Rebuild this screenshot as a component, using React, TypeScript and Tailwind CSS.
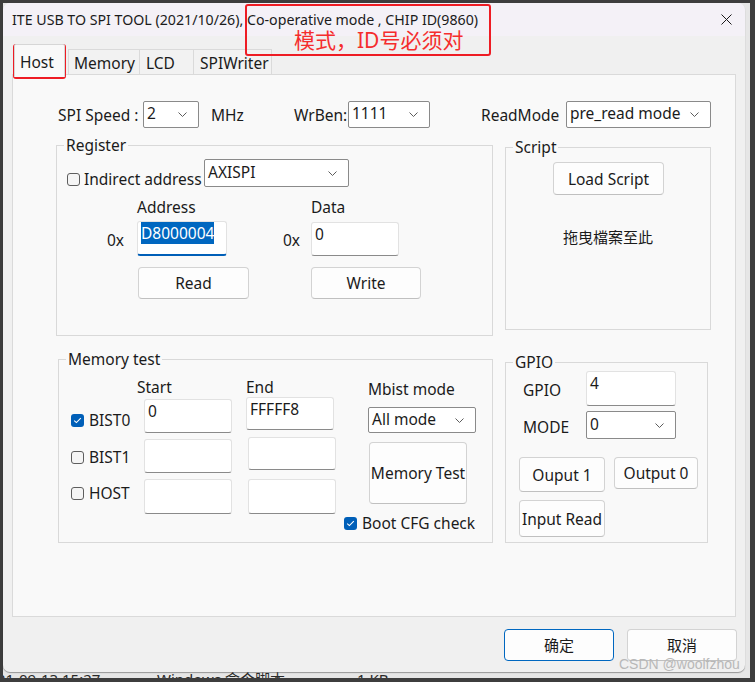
import React from "react";

// Windows 11 style "ITE USB TO SPI TOOL" dialog, Host tab

function Chevron() {
  return (
    <svg width="9" height="5" viewBox="0 0 9 5" className="shrink-0">
      <path d="M0.5 0.5 L4.5 4.5 L8.5 0.5" fill="none" stroke="#5c5c5c" strokeWidth="1" />
    </svg>
  );
}

function Select({ value, className }: { value: string; className: string }) {
  return (
    <div
      className={`flex items-center justify-between shrink-0 bg-white border border-[#8a8a8a] rounded-[2px] pl-[3px] pr-[11px] ${className}`}
    >
      <span className="-mt-[3px] whitespace-nowrap">{value}</span>
      <Chevron />
    </div>
  );
}

function Field({
  value = "",
  className,
  focused = false,
}: {
  value?: string;
  className: string;
  focused?: boolean;
}) {
  return (
    <div
      className={`shrink-0 bg-white border border-[#e2e2e2] rounded-[3px] pl-[3px] pt-[1px] ${
        focused ? "border-b-2 border-b-[#005fb8]" : "border-b-[#8a8a8a]"
      } ${className}`}
    >
      {focused ? <span className="bg-[#0067c0] text-white">{value}</span> : value}
    </div>
  );
}

function Check({ checked = false }: { checked?: boolean }) {
  if (checked) {
    return (
      <span className="flex w-[13px] h-[13px] shrink-0 items-center justify-center rounded-[3px] bg-[#005fb8]">
        <svg width="9" height="7" viewBox="0 0 9 7">
          <path d="M1.2 3.6 L3.4 5.6 L7.8 1.2" fill="none" stroke="white" strokeWidth="1.1" />
        </svg>
      </span>
    );
  }
  return <span className="w-[13px] h-[13px] shrink-0 rounded-[3px] border border-[#5e5e5e] bg-[#f5f5f5]" />;
}

function Btn({
  children,
  className,
  primary = false,
}: {
  children: React.ReactNode;
  className: string;
  primary?: boolean;
}) {
  return (
    <button
      type="button"
      className={`flex shrink-0 items-center justify-center whitespace-nowrap bg-[#fdfdfd] border rounded-[4px] ${
        primary ? "border-[#0067c0]" : "border-[#d3d3d3] border-b-[#c0c0c0]"
      } ${className}`}
    >
      {children}
    </button>
  );
}

function Group({
  title,
  className,
  children,
}: {
  title: string;
  className: string;
  children: React.ReactNode;
}) {
  return (
    <fieldset className={`shrink-0 border border-[#d9d9d9] ${className}`}>
      <legend className="ml-[7px] px-[2px] leading-[20px]">{title}</legend>
      {children}
    </fieldset>
  );
}

function CheckLabel({ label, checked, className }: { label: string; checked?: boolean; className: string }) {
  return (
    <div className={`flex items-center h-[14px] w-[85px] shrink-0 pl-[12px] ${className}`}>
      <Check checked={checked} />
      <span className="ml-[5px]">{label}</span>
    </div>
  );
}

function RegisterGroup() {
  return (
    <Group title="Register" className="w-[437px] h-[201px]">
      <div className="flex items-start h-[28px] mt-[4px] pl-[10px]">
        <div className="flex items-center w-[137px] h-[14px] mt-[13px]">
          <Check />
          <span className="ml-[4px] whitespace-nowrap">Indirect address</span>
        </div>
        <Select value="AXISPI" className="w-[145px] h-[28px]" />
      </div>
      <div className="flex h-[20px] mt-[10px] pl-[80px]">
        <span className="w-[174px]">Address</span>
        <span>Data</span>
      </div>
      <div className="flex items-center mt-[4px] pl-[50px]">
        <span className="w-[30px] pt-[3px]">0x</span>
        <Field value="D8000004" focused className="w-[90px] h-[35px]" />
        <span className="w-[84px] pl-[56px] pt-[3px]">0x</span>
        <Field value="0" className="w-[88px] h-[34px]" />
      </div>
      <div className="flex mt-[11px] pl-[81px]">
        <Btn className="w-[111px] h-[32px]">Read</Btn>
        <Btn className="w-[110px] h-[32px] ml-[62px]">Write</Btn>
      </div>
    </Group>
  );
}

function MemoryGroup() {
  return (
    <Group title="Memory test" className="w-[435px] h-[194px] ml-[2px] mt-[13px]">
      <div className="flex items-start">
        <div className="w-[277px] shrink-0">
          <div className="flex h-[20px] mt-[8px] pl-[78px]">
            <span className="w-[109px]">Start</span>
            <span>End</span>
          </div>
          <div className="flex items-start h-[36px]">
            <CheckLabel label="BIST0" checked className="mt-[16px]" />
            <Field value="0" className="w-[88px] h-[34px] mt-[2px]" />
            <Field value="FFFFF8" className="w-[88px] h-[33px] ml-[14px]" />
          </div>
          <div className="flex items-start h-[36px] mt-[4px]">
            <CheckLabel label="BIST1" className="mt-[13px]" />
            <Field className="w-[88px] h-[34px] mt-[2px]" />
            <Field className="w-[88px] h-[33px] ml-[16px]" />
          </div>
          <div className="flex items-start h-[35px] mt-[6px]">
            <CheckLabel label="HOST" className="mt-[7px]" />
            <Field className="w-[88px] h-[35px]" />
            <Field className="w-[88px] h-[35px] ml-[16px]" />
          </div>
        </div>
        <div className="ml-[32px]">
          <div className="h-[20px] mt-[10px] whitespace-nowrap">Mbist mode</div>
          <Select value="All mode" className="w-[108px] h-[26px] mt-[8px]" />
          <Btn className="w-[98px] h-[62px] mt-[9px] ml-[1px]">Memory Test</Btn>
        </div>
      </div>
      <div className="flex items-center h-[16px] mt-[1px] pl-[285px]">
        <Check checked />
        <span className="ml-[5px] whitespace-nowrap">Boot CFG check</span>
      </div>
    </Group>
  );
}

function ScriptGroup() {
  return (
    <Group title="Script" className="w-[206px] h-[193px] mt-[9px]">
      <Btn className="w-[111px] h-[33px] mt-[5px] ml-[47px]">Load Script</Btn>
      <div className="mt-[32px] text-center text-[15px] font-['Noto_Sans_CJK_TC',sans-serif]">拖曳檔案至此</div>
    </Group>
  );
}

function GpioGroup() {
  return (
    <Group title="GPIO" className="w-[203px] h-[191px] mt-[22px]">
      <div className="flex items-center pl-[17px]">
        <span className="w-[63px] pt-[2px]">GPIO</span>
        <Field value="4" className="w-[90px] h-[35px] -mt-[1px]" />
      </div>
      <div className="flex items-center mt-[5px] pl-[17px]">
        <span className="w-[63px] pt-[4px]">MODE</span>
        <Select value="0" className="w-[90px] h-[28px]" />
      </div>
      <div className="flex items-start mt-[18px] pl-[13px]">
        <Btn className="w-[86px] h-[35px]">Ouput 1</Btn>
        <Btn className="w-[84px] h-[32px] ml-[9px]">Output 0</Btn>
      </div>
      <div className="mt-[8px] pl-[13px]">
        <Btn className="w-[86px] h-[37px]">Input Read</Btn>
      </div>
    </Group>
  );
}

function HostPanel() {
  return (
    <div className="ml-[9px] w-[724px] h-[543px] shrink-0 border border-[#dadada] bg-[#f9f9f9]">
      <div className="flex items-center h-[27px] mt-[26px] pl-[45px]">
        <span className="w-[85px] whitespace-nowrap">SPI Speed :</span>
        <Select value="2" className="w-[56px] h-[27px]" />
        <span className="w-[83px] ml-[12px]">MHz</span>
        <span className="w-[54px]">WrBen:</span>
        <Select value="1111" className="w-[82px] h-[27px]" />
        <span className="w-[85px] ml-[51px]">ReadMode</span>
        <Select value="pre_read mode" className="w-[145px] h-[27px]" />
      </div>
      <div className="flex items-start">
        <div className="ml-[43px] mt-[7px]">
          <RegisterGroup />
          <MemoryGroup />
        </div>
        <div className="ml-[12px]">
          <ScriptGroup />
          <GpioGroup />
        </div>
      </div>
    </div>
  );
}

const TABS = [
  { label: "Memory", w: "w-[72px] pl-[5px] border-l" },
  { label: "LCD", w: "w-[54px] pl-[6px]" },
  { label: "SPIWriter", w: "w-[78px] pl-[6px]" },
];

function Dialog() {
  return (
    <div className="flex flex-col w-[742px] h-[669px] shrink-0 overflow-hidden rounded-[7px] bg-[#f0f0f0] shadow-[0_1px_1px_rgba(0,0,0,0.35)]">
      {/* Title bar */}
      <div className="flex items-center justify-between h-[33px] shrink-0 bg-[#f4f1f7] pl-[9px] pr-[13px]">
        <span className="whitespace-nowrap text-[14.2px]">
          ITE USB TO SPI TOOL (2021/10/26), Co-operative mode , CHIP ID(9860)
        </span>
        <svg width="11" height="11" viewBox="0 0 11 11">
          <path d="M0.5 0.5 L10.5 10.5 M10.5 0.5 L0.5 10.5" stroke="#1a1a1a" strokeWidth="1" />
        </svg>
      </div>

      {/* Tabs */}
      <div className="flex items-end h-[30px] mt-[8px] pl-[11px] shrink-0">
        <div className="relative z-10 w-[51px] h-[33px] -mb-[3px] pl-[5px] pt-[7px] border border-b-0 border-[#d6d6d6] rounded-t-[2px] bg-[#f9f9f9]">
          Host
        </div>
        <div className="flex ml-[3px]">
          {TABS.map((t) => (
            <div
              key={t.label}
              className={`h-[25px] pt-[3px] border-t border-r border-[#dadada] bg-[#f2f2f2] whitespace-nowrap ${t.w}`}
            >
              {t.label}
            </div>
          ))}
        </div>
      </div>

      <HostPanel />

      {/* OK / Cancel */}
      <div className="flex justify-end mt-[12px] pr-[8px] text-[15px]">
        <Btn primary className="w-[110px] h-[32px]">确定</Btn>
        <Btn className="w-[110px] h-[32px] ml-[13px]">取消</Btn>
      </div>
    </div>
  );
}

export default function App() {
  return (
    <div className="relative w-[755px] h-[682px] overflow-hidden bg-[#3d3d3d] font-['Noto_Sans','Noto_Sans_CJK_SC',sans-serif] text-[15.5px] leading-[20px] text-[#1b1b1b]">
      <div className="flex flex-col ml-[3px] mt-[3px] w-[747px] h-[675px] bg-[#e6e6e6]">
        <Dialog />
        {/* explorer list peeking out under the dialog */}
        <div className="h-[6px] overflow-hidden">
          <div className="flex -mt-[3px] -ml-[6px] text-[15px] text-[#2a2a2a] whitespace-nowrap">
            <span className="w-[160px]">21-09-13 15:27</span>
            <span className="w-[200px]">Windows 命令脚本</span>
            <span>1 KB</span>
          </div>
        </div>
      </div>

      {/* Red annotations */}
      <div className="absolute left-[245px] top-[4px] w-[246px] h-[52px] border-[2.5px] border-[#ee1c24] rounded-[3px]" />
      <div className="absolute left-[294px] top-[27px] text-[21px] leading-[26px] text-[#f52d2d] whitespace-nowrap">
        模式，ID号必须对
      </div>
      <div className="absolute left-[13px] top-[44px] w-[53px] h-[35px] border-[2.5px] border-[#ee1c24] rounded-[3px]" />

      {/* Watermark */}
      <div className="absolute left-[619px] top-[655px] text-[14px] leading-[18px] text-[#b8b8b8] font-['Liberation_Sans',sans-serif] whitespace-nowrap">
        CSDN @woolfzhou
      </div>
    </div>
  );
}
